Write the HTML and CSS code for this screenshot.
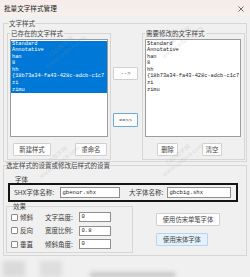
FILE: index.html
```html
<!DOCTYPE html>
<html lang="zh">
<head>
<meta charset="utf-8">
<link rel="stylesheet" href="styles.css">
</head>
<body>
<div class="win">
  <div class="titlebar">
    <span class="title">批量文字样式管理</span>
    <svg class="close" width="6" height="6" viewBox="0 0 6 6"><path d="M0.5 0.5L5.5 5.5M5.5 0.5L0.5 5.5" stroke="#333" stroke-width="0.7"/></svg>
  </div>
  <div class="main">
    <fieldset class="grp outer top">
      <legend>文字样式</legend>
      <div class="styles-row">
        <fieldset class="grp side left">
          <legend>已存在的文字样式</legend>
          <div class="list">
            <div class="item sel">Standard</div>
            <div class="item sel">Annotative</div>
            <div class="item sel">han</div>
            <div class="item sel">8</div>
            <div class="item sel">hh</div>
            <div class="item sel">{18b73a34-fa43-428c-adcb-c1c7</div>
            <div class="item sel">zi</div>
            <div class="item sel">zimu</div>
          </div>
          <div class="btnrow lrow">
            <button class="btn w39">新建样式</button>
            <button class="btn w33">重命名</button>
          </div>
        </fieldset>
        <div class="mid">
          <button class="btn arrow">--&gt;</button>
          <button class="btn arrow focus">==&gt;&gt;</button>
        </div>
        <fieldset class="grp side right">
          <legend>需要修改的文字样式</legend>
          <div class="list">
            <div class="item">Standard</div>
            <div class="item">Annotative</div>
            <div class="item">han</div>
            <div class="item">8</div>
            <div class="item">hh</div>
            <div class="item">{18b73a34-fa43-428c-adcb-c1c7</div>
            <div class="item">zi</div>
            <div class="item">zimu</div>
          </div>
          <div class="btnrow rrow">
            <button class="btn w21">删除</button>
            <button class="btn w20">清空</button>
          </div>
        </fieldset>
      </div>
    </fieldset>
    <fieldset class="grp outer set">
      <legend>选定样式的设置或修改后样式的设置</legend>
      <div class="sublabel">字体</div>
      <div class="fontbox">
        <span class="flabel shx">SHX字体名称:</span>
        <span class="input in60">gbenor.shx</span>
        <span class="flabel big">大字体名称:</span>
        <span class="input in64">gbcbig.shx</span>
      </div>
      <div class="lower">
        <fieldset class="grp effects">
          <legend>效果</legend>
          <div class="erow"><span class="cb"></span><span class="cblabel">倾斜</span><span class="elabel">文字高度:</span><span class="input small">0</span></div>
          <div class="erow"><span class="cb"></span><span class="cblabel">反向</span><span class="elabel">宽度比例:</span><span class="input small">0.8</span></div>
          <div class="erow"><span class="cb"></span><span class="cblabel">垂直</span><span class="elabel">倾斜角度:</span><span class="input small">0</span></div>
        </fieldset>
        <div class="rbtns">
          <button class="btn w64">使用仿宋单笔字体</button>
          <button class="btn w52 hover">使用宋体字体</button>
        </div>
      </div>
    </fieldset>
  </div>
  <div class="footer">
    <div class="blk b1"></div>
    <div class="blk b2"></div>
    <div class="blk b3"></div>
  </div>
  <div class="wm wm1">CAD自学网<br>www.cadzxw.com</div>
  <div class="wm wm2">CAD自学网<br>www.cadzxw.com</div>
  <div class="wm wm3">CAD自学网<br>www.cadzxw.com</div>
  <div class="wm wm4">CAD自学网<br>www.cadzxw.com</div>
</div>
</body>
</html>
```
FILE: styles.css
```css
* { box-sizing: border-box; }
html, body { margin: 0; padding: 0; }
body {
  width: 250px;
  height: 277px;
  overflow: hidden;
  background: #f0f0f0;
  font-family: "Noto Sans CJK SC", "Noto Sans", sans-serif;
  font-size: 6.5px;
  color: #3a3a3a;
}
.win { position: relative; width: 250px; height: 277px; display: flex; flex-direction: column; }
.titlebar {
  height: 17px;
  flex: none;
  display: flex;
  align-items: center;
  justify-content: space-between;
  padding: 0 6px 0 4px;
  background: linear-gradient(#f6ece9, #f7efec 85%, #f2efee);
}
.title { font-size: 6.6px; line-height: 7px; color: #1a1a1a; }
.close { display: block; margin-top: 1px; }
.main { padding: 3px 3px 0 3px; }

fieldset.grp {
  margin: 0;
  border: 1px solid #d6d6d6;
  min-width: 0;
}
legend {
  font-size: 6.5px;
  line-height: 7px;
  padding: 0;
  color: #444;
}
.outer { width: 244px; }
.top { padding: 2.5px 1px 1px 3px; }
.top > legend { margin-left: 2px; }
.styles-row { display: flex; }
.side { padding: 2.5px 3px 3px 2px; }
.side > legend { padding: 0 1px; }
.left { width: 104px; }
.right { width: 103px; }
.list {
  height: 98px;
  background: #fff;
  border: 1px solid #9c9c9c;
  padding-top: 0.5px;
  font-family: "Liberation Mono", monospace;
  font-size: 5.3px;
  line-height: 6.6px;
  color: #222;
  overflow: hidden;
  white-space: nowrap;
}
.left .list { width: 98px; }
.right .list { width: 96px; }
.item { padding-left: 1px; height: 6.6px; }
.item.sel { background: #0078d7; color: #fff; }
.btnrow { display: flex; margin-top: 6px; }
.lrow { padding-left: 3px; gap: 24px; }
.rrow { padding-left: 12px; gap: 24px; }
.btn {
  height: 13px;
  padding: 0;
  margin: 0;
  border: 1px solid #d0d0d0;
  border-radius: 1px;
  background: #fdfdfd;
  font-family: "Noto Sans CJK SC", sans-serif;
  font-size: 6.3px;
  line-height: 11px;
  color: #444;
  text-align: center;
}
.w39 { width: 39px; }
.w33 { width: 33px; }
.w21 { width: 21px; }
.w20 { width: 20px; }
.w64 { width: 64px; }
.w52 { width: 52px; }
.mid {
  width: 31px;
  display: flex;
  flex-direction: column;
  padding: 37.5px 0 0 2px;
  gap: 33px;
}
.arrow {
  width: 25px;
  font-family: "Liberation Mono", monospace;
  font-size: 5.5px;
  color: #555;
}
.focus { border-color: #6fa8dc; height: 14px; }
.set { margin-top: 1px; padding: 0 2px 2px 2px; }
.sublabel { margin: 6.5px 0 0 9px; line-height: 7px; }
.fontbox {
  width: 230px;
  height: 19px;
  margin: 0.5px 0 0 2px;
  border: 2px solid #151515;
  display: flex;
  align-items: center;
  padding-left: 4px;
}
.flabel { line-height: 7px; }
.shx { width: 46px; }
.big { width: 38px; margin-left: 9px; }
.input {
  height: 11px;
  background: #fff;
  border: 1px solid #8f8f8f;
  font-family: "Liberation Mono", monospace;
  font-size: 5.6px;
  line-height: 9px;
  padding-left: 1.5px;
  color: #222;
}
.in60 { width: 60px; }
.in64 { width: 64px; }
.lower { display: flex; margin-top: 0.5px; }
.effects { width: 127px; padding: 1px 0 1px 4px; }
.effects > legend { margin-left: 2px; }
.erow { display: flex; align-items: center; height: 13.5px; }
.cb {
  width: 7px;
  height: 7px;
  border: 1px solid #8a8a8a;
  background: #fff;
  border-radius: 1px;
}
.cblabel { width: 25px; margin-left: 2px; line-height: 7px; }
.elabel { width: 34px; line-height: 7px; }
.input.small { width: 32px; height: 10px; line-height: 8px; }
.rbtns {
  display: flex;
  flex-direction: column;
  align-items: flex-start;
  gap: 7px;
  padding: 10.5px 0 0 23px;
}
.hover { background: #e5f1fb; border-color: #b8d4ee; }
.footer { position: relative; flex: 1; }
.blk { position: absolute; filter: blur(2px); }
.b1 { left: 3px; top: 5px; width: 22px; height: 16px; background: #dadada; }
.b2 { left: 40px; top: 5px; width: 22px; height: 16px; background: #dedede; }
.b3 { left: 90px; top: 16px; width: 85px; height: 6px; background: #c9c9c9; }
.wm {
  position: absolute;
  font-family: "Noto Sans CJK SC", sans-serif;
  font-size: 6px;
  line-height: 7px;
  text-align: center;
  color: rgba(150, 150, 150, 0.28);
  transform: rotate(-38deg);
  white-space: nowrap;
  pointer-events: none;
}
.wm1 { left: 38px; top: 42px; }
.wm2 { left: 155px; top: 32px; }
.wm3 { left: 32px; top: 152px; }
.wm4 { left: 155px; top: 150px; }
```
